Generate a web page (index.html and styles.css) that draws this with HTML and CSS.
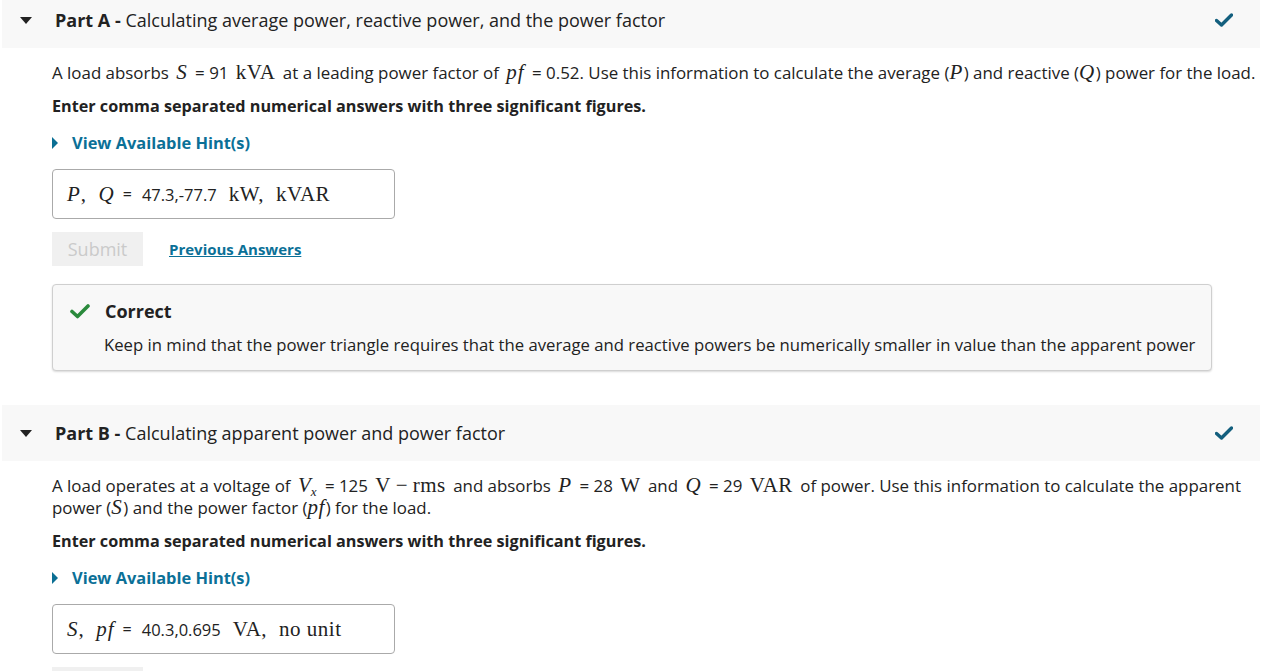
FILE: index.html
```html
<!DOCTYPE html>
<html>
<head>
<meta charset="utf-8">
<link rel="stylesheet" href="styles.css">
</head>
<body>
<div class="page">
  <section class="part part-a">
    <div class="part-head">
      <span class="caret-down"></span>
      <span class="part-title"><b>Part A -</b> Calculating average power, reactive power, and the power factor</span>
      <svg class="done" viewBox="0 0 18 14" width="18" height="14"><path d="M1.5 7.5 L6.5 12 L16.5 2" fill="none" stroke="#135f7e" stroke-width="3.4" stroke-linecap="round" stroke-linejoin="round"/></svg>
    </div>
    <div class="part-body">
      <p class="q">A load absorbs <span class="mi">S</span> = 91 <span class="mr">kVA</span> at a leading power factor of <span class="mi">pf</span> = 0.52. Use this information to calculate the average (<span class="mi in">P</span>) and reactive (<span class="mi in">Q</span>) power for the load.</p>
      <p class="instr">Enter comma separated numerical answers with three significant figures.</p>
      <div class="hint"><span class="caret-right"></span>View Available Hint(s)</div>
      <div class="answer"><span class="mi">P</span><span class="mr comma">,</span><span class="mi">Q</span><span class="eq">=</span><span class="val">47.3,-77.7</span><span class="mr unit">kW<span class="comma">,</span>kVAR</span></div>
      <div class="actions">
        <span class="submit">Submit</span>
        <a class="prev">Previous Answers</a>
      </div>
      <div class="feedback">
        <div class="fb-head">
          <svg class="ok" viewBox="0 0 20 16" width="20" height="16"><path d="M2 8.5 L7.5 13.5 L18 3" fill="none" stroke="#2a8a3c" stroke-width="3.6" stroke-linecap="round" stroke-linejoin="round"/></svg>
          <b>Correct</b>
        </div>
        <p class="fb-text">Keep in mind that the power triangle requires that the average and reactive powers be numerically smaller in value than the apparent power</p>
      </div>
    </div>
  </section>

  <section class="part part-b">
    <div class="part-head">
      <span class="caret-down"></span>
      <span class="part-title"><b>Part B -</b> Calculating apparent power and power factor</span>
      <svg class="done" viewBox="0 0 18 14" width="18" height="14"><path d="M1.5 7.5 L6.5 12 L16.5 2" fill="none" stroke="#135f7e" stroke-width="3.4" stroke-linecap="round" stroke-linejoin="round"/></svg>
    </div>
    <div class="part-body">
      <p class="q">A load operates at a voltage of <span class="mi">V<span class="sub">x</span></span> = 125 <span class="mr">V&thinsp;&minus;&thinsp;rms</span> and absorbs <span class="mi">P</span> = 28 <span class="mr">W</span> and <span class="mi">Q</span> = 29 <span class="mr">VAR</span> of power. Use this information to calculate the apparent power (<span class="mi in">S</span>) and the power factor (<span class="mi in">pf</span>) for the load.</p>
      <p class="instr">Enter comma separated numerical answers with three significant figures.</p>
      <div class="hint"><span class="caret-right"></span>View Available Hint(s)</div>
      <div class="answer"><span class="mi">S</span><span class="mr comma">,</span><span class="mi">pf</span><span class="eq">=</span><span class="val">40.3,0.695</span><span class="mr unit">VA<span class="comma">,</span>no unit</span></div>
      <div class="actions">
        <span class="submit">Submit</span>
      </div>
    </div>
  </section>
</div>
</body>
</html>
```

FILE: styles.css
```css
html, body {
  margin: 0;
  padding: 0;
  background: #ffffff;
}
body {
  font-family: "Open Sans", "Noto Sans", sans-serif;
  color: #222;
  font-size: 16px;
  overflow: hidden;
}
.page {
  width: 1265px;
}
.part-a {
  margin-top: -8px;
}
.part-head {
  margin-left: 2px;
  width: 1258px;
  height: 56px;
  background: #f8f8f8;
  display: flex;
  align-items: center;
}
.caret-down {
  width: 0;
  height: 0;
  border-left: 6px solid transparent;
  border-right: 6px solid transparent;
  border-top: 7px solid #222;
  margin-left: 18px;
  margin-right: 23px;
}
.part-title {
  font-size: 18px;
  flex: 1;
}
.part-title b {
  font-weight: 700;
}
.done {
  margin-right: 27px;
}
.part-body {
  padding-left: 52px;
  padding-top: 14px;
}
.q {
  margin: 0;
  line-height: 22px;
  font-size: 16.9px;
  width: 1212px;
}
.q .mi, .q .mr {
  padding: 0 3px;
}
.q .mi.in {
  padding: 0 1px 0 0;
  letter-spacing: 0.5px;
}
.mi {
  font-family: "Liberation Serif", "DejaVu Serif", serif;
  font-style: italic;
  font-size: 21px;
  line-height: 0;
  letter-spacing: 1px;
}
.sub {
  font-size: 13px;
  vertical-align: -4px;
  line-height: 0;
  margin-left: -1px;
}
.mr {
  font-family: "Liberation Serif", "DejaVu Serif", serif;
  font-size: 21px;
  line-height: 0;
  letter-spacing: 0.5px;
}
.instr {
  margin: 11px 0 0;
  line-height: 22px;
  font-weight: 700;
  font-size: 16.2px;
}
.hint {
  margin-top: 15px;
  line-height: 22px;
  font-weight: 700;
  font-size: 16.4px;
  color: #0b7097;
  display: flex;
  align-items: center;
}
.caret-right {
  width: 0;
  height: 0;
  border-top: 6px solid transparent;
  border-bottom: 6px solid transparent;
  border-left: 6px solid #0b6f94;
  margin-right: 14px;
}
.answer {
  margin-top: 15px;
  width: 327px;
  height: 48px;
  border: 1px solid #aaa;
  border-radius: 4px;
  display: flex;
  align-items: center;
  padding-left: 14px;
  box-sizing: content-box;
}
.answer .comma {
  margin-right: 12px;
}
.answer .eq {
  font-size: 16px;
  margin: 0 10px 0 8px;
}
.answer .val {
  font-size: 16.5px;
  margin-right: 12px;
}
.actions {
  margin-top: 13px;
  display: flex;
  align-items: center;
}
.submit {
  width: 91px;
  height: 34px;
  background: #f0f0f0;
  color: #cacaca;
  font-size: 18px;
  display: flex;
  align-items: center;
  justify-content: center;
}
.prev {
  margin-left: 26px;
  font-weight: 700;
  font-size: 15px;
  color: #0b7097;
  text-decoration: underline;
}
.feedback {
  margin-top: 18px;
  width: 1158px;
  background: #f8f8f8;
  border: 1px solid #cfcfcf;
  border-radius: 4px;
  box-shadow: 0 1px 2px rgba(0,0,0,0.15);
  padding: 15px 0 14px 0;
  margin-bottom: 34px;
}
.fb-head {
  display: flex;
  align-items: center;
  line-height: 22px;
  font-size: 18px;
  padding-left: 17px;
}
.ok {
  margin-right: 15px;
}
.fb-text {
  margin: 12px 0 0 51px;
  line-height: 22px;
  font-size: 16.7px;
}
```
